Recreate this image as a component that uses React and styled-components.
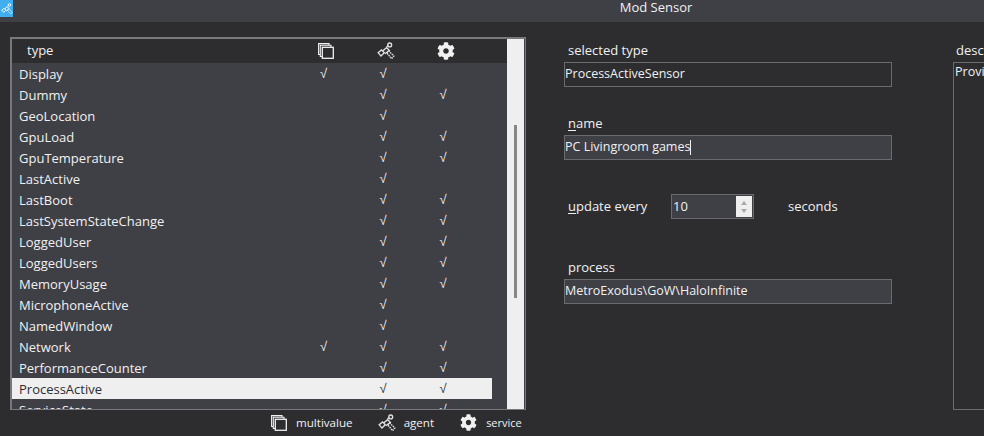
import React from "react";
import styled, { createGlobalStyle } from "styled-components";
import { FaCog } from "react-icons/fa";

const Global = createGlobalStyle`
  html, body { margin: 0; padding: 0; background: #2d2d30; }
  body { font-family: "Open Sans", "Noto Sans", sans-serif; font-size: 13px; color: #f1f1f1; }
`;

const Page = styled.div`
  width: 984px; height: 436px; overflow: hidden;
  display: flex; flex-direction: column;
  background: #2d2d30;
`;
const TitleBar = styled.header`
  height: 22px; flex: none; background: #3f3f46;
  display: flex; align-items: center; position: relative;
`;
const AppIcon = styled.div`
  width: 13px; height: 17px; background: #41aef0; color: #fff;
  display: flex; align-items: center; justify-content: center;
  align-self: flex-start;
`;
const Title = styled.div`
  position: absolute; left: 0; right: 0; top: 0; line-height: 14px; text-align: center;
  padding-left: 328px; color: #f1f1f1;
`;
const Body = styled.main`
  flex: 1; min-height: 0; display: flex; padding: 15px 0 0 10px; align-items: flex-start;
`;
const LeftCol = styled.section`
  width: 516px; flex: none; display: flex; flex-direction: column;
`;
const TableBox = styled.div`
  height: 373px; box-sizing: border-box;
  border: 1px solid #77777c; border-top-width: 2px; border-left-width: 2px;
  display: flex; overflow: hidden;
`;
const TableMain = styled.div`
  width: 495px; flex: none; background: #3f3f46; display: flex; flex-direction: column;
`;
const Scrollbar = styled.div`
  width: 17px; flex: none; background: #efefef; position: relative;
`;
const ScrollThumb = styled.div`
  position: absolute; left: 7px; top: 86px; width: 3px; height: 173px; background: #868686;
`;
const ScrollGutter = styled.div`width: 2px; flex: none; background: #3f3f46;`;
const Cols = `display: grid; grid-template-columns: 284px 59px 60px 60px 1fr;`;
const HeaderRow = styled.div`
  ${Cols} align-items: center; height: 24px; flex: none; background: #2d2d30; color: #f1f1f1;
`;
const HeaderName = styled.div`padding: 0 0 2px 15px;`;
const HeadIcon = styled.div`
  display: flex; justify-content: center; align-items: center; height: 24px;
  transform: translateX(${p => p.$dx || 0}px);
`;
const Rows = styled.div`flex: 1; min-height: 0; overflow: hidden; width: 480px;`;
const Row = styled.div`
  ${Cols} align-items: start; height: 21px; line-height: 23px;
  background: ${p => (p.$selected ? "#efefef" : "transparent")};
  color: ${p => (p.$selected ? "#2d2d30" : "#f1f1f1")};
`;
const Name = styled.div`padding-left: 7px; white-space: nowrap;`;
const Check = styled.div`
  text-align: center; font-family: "Liberation Sans", sans-serif; font-size: 13px;
  line-height: 21px; transform: translateX(-2px);
`;
const Legend = styled.footer`
  display: flex; align-items: center; height: 25px; padding-left: 261px; color: #f1f1f1; font-size: 11.6px;
`;
const LegendItem = styled.div`
  display: flex; align-items: center; gap: ${p => p.$gap || 9}px; margin-left: ${p => p.$ml || 0}px;
`;
const LegendService = styled.span`font-size: 11px;`;
const MidCol = styled.section`
  width: 328px; flex: none; margin-left: 38px; padding-top: 4px; display: flex; flex-direction: column;
`;
const Label = styled.label`
  display: block; padding-left: 4px; line-height: 18px; height: 18px; margin-top: ${p => p.$mt || 0}px; margin-bottom: 3px;
  u { text-underline-offset: 2px; }
`;
const Input = styled.div`
  height: 25px; box-sizing: border-box; border: 1px solid #6b6b6f;
  background: ${p => (p.$dark ? "#2d2d30" : "#3f3f46")};
  padding: 0 0 2px 0; line-height: 21px; display: flex; align-items: center; white-space: nowrap; font-size: 12.5px;
`;
const Caret = styled.span`display: inline-block; width: 1px; height: 15px; margin-top: 2px; background: #f1f1f1;`;
const SpinRow = styled.div`
  display: flex; align-items: center; height: 25px; margin-top: 34px; padding-left: 4px;
`;
const SpinLabel = styled.label`width: 103px; flex: none; margin-top: -2px; u { text-underline-offset: 2px; }`;
const Spin = styled.div`
  width: 83px; height: 25px; box-sizing: border-box; border: 1px solid #6b6b6f; background: #3f3f46;
  display: flex; justify-content: space-between; padding: 1px; line-height: 21px;
`;
const SpinButtons = styled.div`
  width: 16px; background: #efefef; display: flex; flex-direction: column; align-items: center; justify-content: center; gap: 4px;
`;
const Arrow = styled.i`
  width: 0; height: 0; border-left: 3.5px solid transparent; border-right: 3.5px solid transparent;
  ${p => p.$up ? "border-bottom: 4px solid #a8a8a8;" : "border-top: 4px solid #a8a8a8;"}
`;
const Seconds = styled.span`margin-left: 34px; margin-top: -2px;`;
const RightCol = styled.section`
  margin-left: 61px; flex: none; width: 60px; padding-top: 4px; display: flex; flex-direction: column;
`;
const DescLabel = styled.div`padding-left: 3px; height: 21px; line-height: 18px; white-space: nowrap; overflow: hidden;`;
const DescBox = styled.div`
  height: 348px; box-sizing: border-box; border: 1px solid #6b6b6f; border-right: 0; padding-left: 1px; line-height: 17px; overflow: hidden; white-space: nowrap; font-size: 12.5px;
`;

const MultiIcon = ({ size = 16 }) => (
  <svg width={size} height={size} viewBox="0 0 16 16" fill="none" stroke="currentColor" strokeWidth="1.1">
    <path d="M2 11.500H.6V.6H11V2" />
    <path d="M4 13.500H2.300V2.300H13V4" />
    <rect x="4.300" y="4.300" width="11" height="11" strokeWidth="1.300" />
  </svg>
);
const AgentIcon = ({ size = 18, color = "#e2e2e2" }) => (
  <svg width={size} height={size} viewBox="0 0 16 16" fill="none" stroke={color} strokeWidth="1.200">
    <path d="M1 9.500 L4 7 L6.500 9.500 L3.500 12.500 Z" />
    <path d="M5 8 L8.500 5 L11 7.500 L7 10.500" />
    <path d="M8.500 4.500 L10 3" />
    <circle cx="11.300" cy="2.600" r="1.700" />
    <path d="M8.500 9.500 L10.500 8 L15 12.500 L13 14.800 Z" strokeDasharray="1.400 .7" />
  </svg>
);

const data = [
  ["Display", 1, 1, 0], ["Dummy", 0, 1, 1], ["GeoLocation", 0, 1, 0], ["GpuLoad", 0, 1, 1],
  ["GpuTemperature", 0, 1, 1], ["LastActive", 0, 1, 0], ["LastBoot", 0, 1, 1],
  ["LastSystemStateChange", 0, 1, 1], ["LoggedUser", 0, 1, 1], ["LoggedUsers", 0, 1, 1],
  ["MemoryUsage", 0, 1, 1], ["MicrophoneActive", 0, 1, 0], ["NamedWindow", 0, 1, 0],
  ["Network", 1, 1, 1], ["PerformanceCounter", 0, 1, 1], ["ProcessActive", 0, 1, 1], ["ServiceState", 0, 1, 1],
];

export default function App() {
  return (
    <Page>
      <Global />
      <TitleBar>
        <AppIcon><AgentIcon size={12} color="#fff" /></AppIcon>
        <Title>Mod Sensor</Title>
      </TitleBar>
      <Body>
        <LeftCol>
          <TableBox>
            <TableMain>
              <HeaderRow>
                <HeaderName>type</HeaderName>
                <HeadIcon><MultiIcon /></HeadIcon>
                <HeadIcon $dx={1}><AgentIcon /></HeadIcon>
                <HeadIcon $dx={1}><FaCog size={18} /></HeadIcon>
              </HeaderRow>
              <Rows>
                {data.map(([n, m, a, s]) => (
                  <Row key={n} $selected={n === "ProcessActive"}>
                    <Name>{n}</Name>
                    <Check>{m ? "√" : ""}</Check>
                    <Check>{a ? "√" : ""}</Check>
                    <Check>{s ? "√" : ""}</Check>
                  </Row>
                ))}
              </Rows>
            </TableMain>
            <Scrollbar><ScrollThumb /></Scrollbar>
            <ScrollGutter />
          </TableBox>
          <Legend>
            <LegendItem><MultiIcon /><span>multivalue</span></LegendItem>
            <LegendItem $ml={25} $gap={8}><AgentIcon /><span>agent</span></LegendItem>
            <LegendItem $ml={26}><FaCog size={17} /><LegendService>service</LegendService></LegendItem>
          </Legend>
        </LeftCol>
        <MidCol>
          <Label>selected type</Label>
          <Input $dark>ProcessActiveSensor</Input>
          <Label $mt={27}><u>n</u>ame</Label>
          <Input>PC Livingroom games<Caret /></Input>
          <SpinRow>
            <SpinLabel><u>u</u>pdate every</SpinLabel>
            <Spin>10<SpinButtons><Arrow $up /><Arrow /></SpinButtons></Spin>
            <Seconds>seconds</Seconds>
          </SpinRow>
          <Label $mt={39}>process</Label>
          <Input>MetroExodus\GoW\HaloInfinite</Input>
        </MidCol>
        <RightCol>
          <DescLabel>description</DescLabel>
          <DescBox>Provides</DescBox>
        </RightCol>
      </Body>
    </Page>
  );
}
